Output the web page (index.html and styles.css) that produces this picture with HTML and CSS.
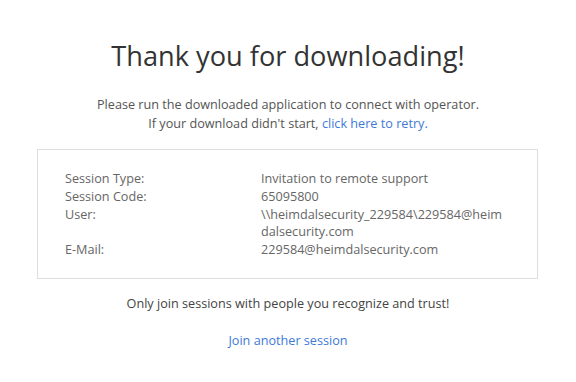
FILE: index.html
```html
<!DOCTYPE html>
<html>
<head>
<meta charset="utf-8">
<link rel="stylesheet" href="styles.css">
</head>
<body>
<div class="page">
  <h1 class="title">Thank you for downloading!</h1>
  <p class="intro">Please run the downloaded application to connect with operator.<br>If your download didn't start, <a class="link" href="#">click here to retry.</a></p>
  <div class="box">
    <div class="grid">
      <div class="label">Session Type:</div><div class="value">Invitation to remote support</div>
      <div class="label">Session Code:</div><div class="value">65095800</div>
      <div class="label">User:</div><div class="value">\\heimdalsecurity_229584\229584@heimdalsecurity.com</div>
      <div class="label">E-Mail:</div><div class="value">229584@heimdalsecurity.com</div>
    </div>
  </div>
  <p class="warn">Only join sessions with people you recognize and trust!</p>
  <a class="link join" href="#">Join another session</a>
</div>
</body>
</html>
```
FILE: styles.css
```css
html, body { margin: 0; padding: 0; background: #fff; }
body { font-family: "Open Sans", sans-serif; color: #555; }
.page { display: flex; flex-direction: column; align-items: center; padding-top: 37px; }
.title { margin: 0; font-size: 27.2px; font-weight: 400; color: #333; line-height: 38px; }
.intro { margin: 20px 0 0; font-size: 12.65px; line-height: 19px; text-align: center; color: #555; }
.link { color: #3d7ad6; text-decoration: none; }
.box { margin: 16px 1px 0 0; width: 501px; box-sizing: border-box; border: 1px solid #ddd; padding: 20px 34px 19px 27px; }
.grid { display: grid; grid-template-columns: 196px 1fr; font-size: 12.65px; line-height: 17.75px; color: #666; }
.value { word-break: break-all; }
.warn { margin: 15px 0 0; font-size: 12.65px; line-height: 19px; color: #444; }
.join { margin-top: 18px; font-size: 12.65px; line-height: 19px; }
```
